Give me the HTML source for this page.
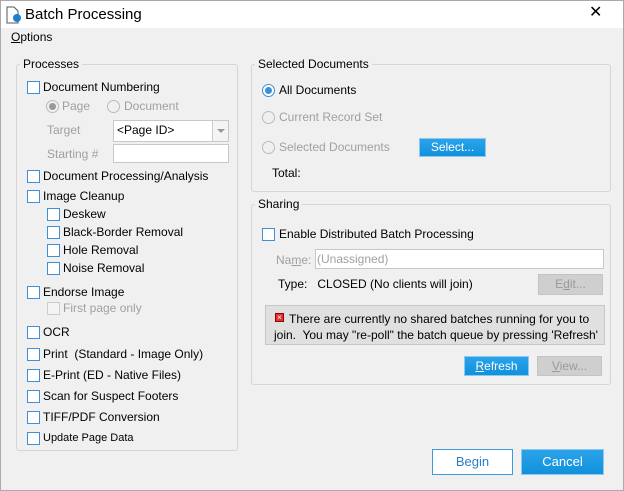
<!DOCTYPE html>
<html><head><style>
*{box-sizing:border-box;margin:0;padding:0}
body{width:624px;height:491px;background:#f0f0f0;font-family:"Liberation Sans",sans-serif;font-size:12px;color:#000;position:relative;overflow:hidden;box-shadow:inset 0 0 0 1px #aaa}
.a{position:absolute;white-space:nowrap;line-height:14px}
.cb{position:absolute;width:13px;height:13px;border:1px solid #3c8fd8;background:#fff}
.rd{position:absolute;width:13px;height:13px;border:1px solid #999;border-radius:50%;background:#f0f0f0}
.rd.on{border-color:#3c8fd8;background:#fff}
.rd.on::after{content:"";position:absolute;left:2px;top:2px;width:7px;height:7px;border-radius:50%;background:#3c8fd8}
.rd.dis{border-color:#bbb}
.dis{color:#a0a0a0}
.grp{position:absolute;border:1px solid #d5d5d5;border-radius:3px}
.gl{position:absolute;background:#f0f0f0;padding:0 3px;line-height:14px}
.btn{position:absolute;text-align:center;font-size:12px}
.blue{background:linear-gradient(#2ba3ea,#1191dc);color:#fff;border:1px solid #8cc8f0}
.gray{background:#cfcfcf;color:#9a9a9a;border:1px solid #c4c4c4}
.inp{position:absolute;background:#fff;border:1px solid #c8c8c8}
</style></head><body>
<div style="position:absolute;left:1px;top:1px;width:622px;height:27px;background:#fff"></div>
<svg class="a" style="left:6px;top:6px" width="16" height="18" viewBox="0 0 16 18"><path d="M1 1h7l4 4v12H1z" fill="#fff" stroke="#555"/><circle cx="11" cy="12" r="4" fill="#1c7fd0"/></svg>
<div class="a" style="left:25px;top:6px;font-size:15px;line-height:18px">Batch Processing</div>
<div class="a" style="left:589px;top:4px;font-size:16px;line-height:18px">✕</div>
<div class="a" style="left:11px;top:30px"><u>O</u>ptions</div>

<div class="grp" style="left:16px;top:64px;width:222px;height:387px"></div>
<div class="gl" style="left:20px;top:57px">Processes</div>
<div class="cb" style="left:27px;top:81px"></div><div class="a" style="left:43px;top:80px">Document Numbering</div>
<div class="rd dis" style="left:46px;top:100px;border-color:#bbb;background:#f0f0f0"><div style="position:absolute;left:2px;top:2px;width:7px;height:7px;border-radius:50%;background:#999"></div></div><div class="a dis" style="left:62px;top:99px">Page</div>
<div class="rd dis" style="left:107px;top:100px"></div><div class="a dis" style="left:124px;top:99px">Document</div>
<div class="a dis" style="left:47px;top:123px">Target</div>
<div class="inp" style="left:113px;top:120px;width:116px;height:22px"></div>
<div class="a" style="left:117px;top:123px">&lt;Page ID&gt;</div>
<div style="position:absolute;left:212px;top:121px;width:16px;height:20px;border-left:1px solid #ccc;background:#f4f4f4"><div style="position:absolute;left:4px;top:8px;border:4px solid transparent;border-top-color:#999"></div></div>
<div class="a dis" style="left:47px;top:147px">Starting #</div>
<div class="inp" style="left:113px;top:144px;width:116px;height:19px"></div>
<div class="cb" style="left:27px;top:170px"></div><div class="a" style="left:43px;top:169px">Document Processing/Analysis</div>
<div class="cb" style="left:27px;top:190px"></div><div class="a" style="left:43px;top:189px">Image Cleanup</div>
<div class="cb" style="left:47px;top:208px"></div><div class="a" style="left:63px;top:207px">Deskew</div>
<div class="cb" style="left:47px;top:226px"></div><div class="a" style="left:63px;top:225px">Black-Border Removal</div>
<div class="cb" style="left:47px;top:244px"></div><div class="a" style="left:63px;top:243px">Hole Removal</div>
<div class="cb" style="left:47px;top:262px"></div><div class="a" style="left:63px;top:261px">Noise Removal</div>
<div class="cb" style="left:27px;top:286px"></div><div class="a" style="left:43px;top:285px">Endorse Image</div>
<div class="cb" style="left:47px;top:302px;border-color:#ccc;background:#f4f4f4"></div><div class="a dis" style="left:63px;top:301px">First page only</div>
<div class="cb" style="left:27px;top:326px"></div><div class="a" style="left:43px;top:325px">OCR</div>
<div class="cb" style="left:27px;top:348px"></div><div class="a" style="left:43px;top:347px">Print&nbsp; (Standard - Image Only)</div>
<div class="cb" style="left:27px;top:369px"></div><div class="a" style="left:43px;top:368px">E-Print (ED - Native Files)</div>
<div class="cb" style="left:27px;top:390px"></div><div class="a" style="left:43px;top:389px">Scan for Suspect Footers</div>
<div class="cb" style="left:27px;top:411px"></div><div class="a" style="left:43px;top:410px">TIFF/PDF Conversion</div>
<div class="cb" style="left:27px;top:432px"></div><div class="a" style="left:43px;top:431px;font-size:11px">Update Page Data</div>

<div class="grp" style="left:251px;top:64px;width:360px;height:128px"></div>
<div class="gl" style="left:255px;top:57px">Selected Documents</div>
<div class="rd on" style="left:262px;top:84px"></div><div class="a" style="left:279px;top:83px">All Documents</div>
<div class="rd dis" style="left:262px;top:111px"></div><div class="a dis" style="left:279px;top:110px">Current Record Set</div>
<div class="rd dis" style="left:262px;top:141px"></div><div class="a dis" style="left:279px;top:140px">Selected Documents</div>
<div class="btn blue" style="left:419px;top:138px;width:67px;height:19px;line-height:17px">Select...</div>
<div class="a" style="left:272px;top:166px">Total:</div>

<div class="grp" style="left:251px;top:204px;width:360px;height:181px"></div>
<div class="gl" style="left:255px;top:197px">Sharing</div>
<div class="cb" style="left:262px;top:228px"></div><div class="a" style="left:279px;top:227px">Enable Distributed Batch Processing</div>
<div class="a dis" style="left:276px;top:253px">Na<u>m</u>e:</div>
<div class="inp" style="left:315px;top:249px;width:289px;height:20px"></div>
<div class="a dis" style="left:317px;top:252px">(Unassigned)</div>
<div class="a" style="left:278px;top:277px">Type:&nbsp;&nbsp; CLOSED (No clients will join)</div>
<div class="btn gray" style="left:538px;top:274px;width:65px;height:21px;line-height:19px">E<u>d</u>it...</div>
<div style="position:absolute;left:265px;top:305px;width:340px;height:40px;background:#e0e0e0;border:1px solid #c8c8c8"></div>
<div style="position:absolute;left:275px;top:313px;width:9px;height:9px;background:#d33;border:1px solid #900;color:#fff;font-size:8px;line-height:7px;text-align:center">×</div>
<div class="a" style="left:289px;top:311px;line-height:16px">There are currently no shared batches running for you to</div>
<div class="a" style="left:274px;top:327px;line-height:16px">join.&nbsp; You may "re-poll" the batch queue by pressing 'Refresh'</div>
<div class="btn blue" style="left:464px;top:356px;width:65px;height:20px;line-height:18px"><u>R</u>efresh</div>
<div class="btn gray" style="left:537px;top:356px;width:65px;height:20px;line-height:18px"><u>V</u>iew...</div>

<div class="btn" style="left:432px;top:449px;width:81px;height:26px;line-height:24px;background:#fff;border:1px solid #3c9be0;color:#2a7fc4;font-size:13px">Begin</div>
<div class="btn blue" style="left:521px;top:449px;width:83px;height:26px;line-height:24px;font-size:13px">Cancel</div>
</body></html>
